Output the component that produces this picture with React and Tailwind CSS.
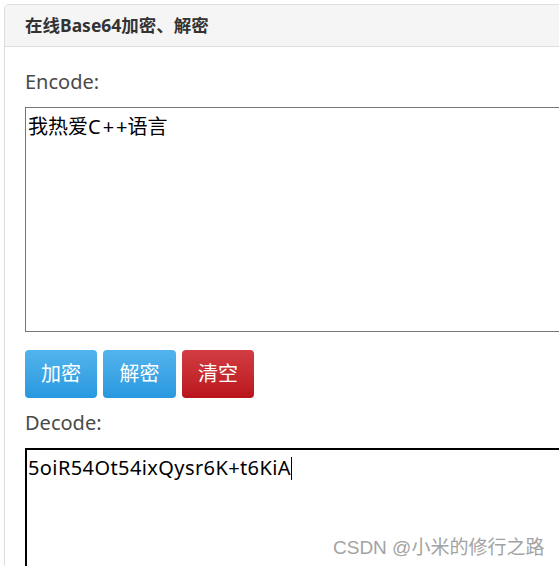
import React from "react";

export default function App() {
  const font = { fontFamily: '"Noto Sans", "Noto Sans CJK SC", sans-serif' };
  return (
    <div className="relative w-[559px] h-[566px] overflow-hidden bg-white" style={font}>
      <div className="ml-[4px] mt-[4px] w-[700px] h-[700px] rounded-tl-[4px] border border-[#dddddd]">
        <div className="h-[42px] bg-[#f5f5f5] border-b border-[#dddddd] flex items-center pl-[20px]">
          <span className="text-[17.5px] font-bold text-[#333333] leading-none">在线Base64加密、解密</span>
        </div>
        <div className="pl-[20px] pt-[22px]">
          <div className="text-[20px] leading-[25px] text-[#4a4a4a]">Encode:</div>
          <div className="mt-[13px] h-[225px] w-[600px] border border-[#767676] px-[2px] pt-[6px] text-[20px] leading-[25px] text-black">
            我热爱C<span className="mx-[2px]">+</span>+语言
          </div>
          <div className="mt-[18px] flex gap-[6px]">
            <div className="h-[48px] w-[72px] rounded-[4px] bg-gradient-to-b from-[#52b4ed] to-[#2898df] flex items-center justify-center text-white text-[20px]">加密</div>
            <div className="h-[48px] w-[73px] rounded-[4px] bg-gradient-to-b from-[#52b4ed] to-[#2898df] flex items-center justify-center text-white text-[20px]">解密</div>
            <div className="h-[48px] w-[72px] rounded-[4px] bg-gradient-to-b from-[#d23c42] to-[#b9141b] flex items-center justify-center text-white text-[20px]">清空</div>
          </div>
          <div className="mt-[12px] text-[20px] leading-[25px] text-[#4a4a4a]">Decode:</div>
          <div className="mt-[13px] h-[225px] w-[600px] border-2 border-black px-[1px] pt-[5px] text-[20px] leading-[25px] text-black flex items-start">
            <span className="tracking-[0.4px]">5oiR54Ot54ixQysr6K+t6KiA</span>
            <span className="inline-block w-[1px] h-[23px] bg-black mt-[2px]"></span>
          </div>
        </div>
      </div>
      <div className="absolute left-[333px] top-[534px] text-[19px] text-[#a3a3a3]" style={{ fontFamily: '"Liberation Sans", "Noto Sans CJK SC", sans-serif' }}>
        CSDN @小米的修行之路
      </div>
    </div>
  );
}
